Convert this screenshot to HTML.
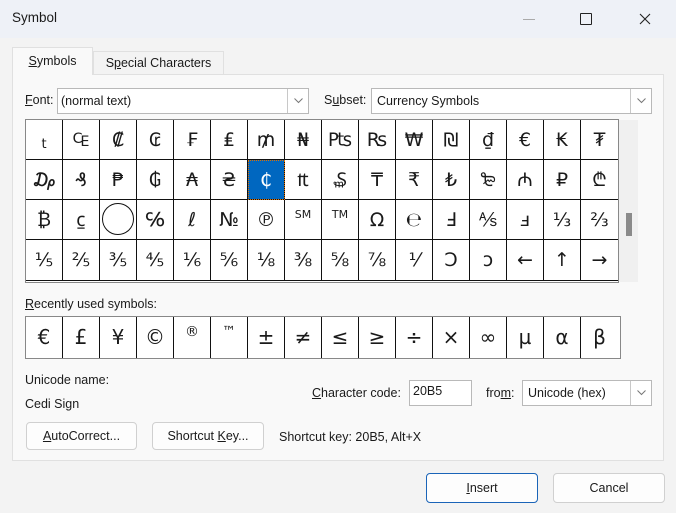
<!DOCTYPE html>
<html><head><meta charset="utf-8"><style>
*{box-sizing:border-box;margin:0;padding:0}
body{width:676px;height:513px;background:#f3f3f3;font-family:"Segoe UI","Liberation Sans","DejaVu Sans",sans-serif;font-size:12px;color:#1a1a1a;position:relative;overflow:hidden}
.a{position:absolute}
.title{left:0;top:0;width:676px;height:38px;background:#eef1f7}
.panel{left:12px;top:74px;width:652px;height:387px;background:#f9f9f9;border:1px solid #e0e0e0}
.tab{top:48px;height:27px;border:1px solid #e0e0e0;border-bottom:none;background:#f9f9f9;text-align:center;line-height:26px;font-size:12.5px}
.combo{background:#fff;border:1px solid #b9b9b9;height:26px;line-height:24px;padding-left:3px;font-size:12.5px}
.combo .dd{position:absolute;right:0;top:0;width:21px;height:24px;border-left:1px solid #c8c8c8}
.combo .dd svg{position:absolute;left:6px;top:9px}
.g{position:absolute;width:37px;height:40px;border-right:1px solid #111;border-bottom:1px solid #111;text-align:center;line-height:40px;font-family:"DejaVu Sans","Liberation Sans",sans-serif;font-size:19px;overflow:hidden;white-space:nowrap;background:#fff}
.r{position:absolute;width:37px;height:41px;border-right:1px solid #111;text-align:center;line-height:41px;font-family:"DejaVu Sans","Liberation Sans",sans-serif;font-size:20px;background:#fff}
u{text-decoration:underline}
</style></head><body>
<div class="a title"></div>
<div class="a" style="left:12px;top:10px;font-size:13.5px">Symbol</div>
<div class="a" style="left:523px;top:19px;width:12px;height:1px;background:#aaa"></div>
<div class="a" style="left:580px;top:13px;width:12px;height:12px;border:1px solid #222;border-radius:1px"></div>
<svg class="a" style="left:639px;top:13px" width="12" height="12"><path d="M1 1L11 11M11 1L1 11" stroke="#222" stroke-width="1.1"/></svg>
<div class="a panel"></div>
<div class="a tab" style="left:12px;width:81px;height:28px;top:47px"><u>S</u>ymbols</div>
<div class="a tab" style="left:93px;width:131px;top:51px;height:23px;line-height:22px;background:#f3f3f3">S<u>p</u>ecial Characters</div>
<div class="a" style="left:25px;top:93px;font-size:12.5px"><u>F</u>ont:</div>
<div class="a combo" style="left:57px;top:88px;width:252px">(normal text)<div class="dd"><svg width="9" height="6"><path d="M0.5 0.5L4.5 4.5L8.5 0.5" fill="none" stroke="#777"/></svg></div></div>
<div class="a" style="left:324px;top:93px;font-size:12.5px">S<u>u</u>bset:</div>
<div class="a combo" style="left:371px;top:88px;width:281px;padding-left:5px">Currency Symbols<div class="dd"><svg width="9" height="6"><path d="M0.5 0.5L4.5 4.5L8.5 0.5" fill="none" stroke="#777"/></svg></div></div>
<div class="a" style="left:25px;top:119px;width:594px;height:164px;border:1px solid #888;background:#fff"></div>
<div id="grid"></div>
<div class="a" style="left:619px;top:120px;width:19px;height:162px;background:#f0f0f0"></div>
<div class="a" style="left:626px;top:213px;width:6px;height:23px;background:#8a8a8a"></div>
<div class="a" style="left:25px;top:297px;font-size:12.5px"><u>R</u>ecently used symbols:</div>
<div class="a" style="left:25px;top:316px;width:596px;height:43px;border:1px solid #888;background:#fff"></div>
<div id="rec"></div>
<div class="a" style="left:25px;top:373px;font-size:12.5px">Unicode name:</div>
<div class="a" style="left:25px;top:397px;font-size:12.5px">Cedi Sign</div>
<div class="a" style="left:312px;top:386px;font-size:12.5px"><u>C</u>haracter code:</div>
<div class="a" style="left:409px;top:380px;width:63px;height:26px;background:#fff;border:1px solid #b9b9b9;padding:3px 0 0 3px;font-size:12.5px">20B5</div>
<div class="a" style="left:486px;top:386px;font-size:12.5px">fro<u>m</u>:</div>
<div class="a combo" style="left:522px;top:380px;width:130px;padding-left:5px">Unicode (hex)<div class="dd"><svg width="9" height="6"><path d="M0.5 0.5L4.5 4.5L8.5 0.5" fill="none" stroke="#777"/></svg></div></div>
<div class="a" style="left:26px;top:422px;width:111px;height:28px;line-height:26px;background:#fdfdfd;border:1px solid #d0d0d0;border-radius:4px;text-align:center;font-size:12.5px"><u>A</u>utoCorrect...</div>
<div class="a" style="left:152px;top:422px;width:112px;height:28px;line-height:26px;background:#fdfdfd;border:1px solid #d0d0d0;border-radius:4px;text-align:center;font-size:12.5px">Shortcut <u>K</u>ey...</div>
<div class="a" style="left:279px;top:430px;font-size:12.5px">Shortcut key: 20B5, Alt+X</div>
<div class="a" style="left:426px;top:473px;width:112px;height:30px;line-height:28px;background:#fdfdfd;border:1px solid #1a64b8;border-radius:4px;text-align:center;font-size:12.5px"><u>I</u>nsert</div>
<div class="a" style="left:553px;top:473px;width:112px;height:30px;line-height:28px;background:#fdfdfd;border:1px solid #d0d0d0;border-radius:4px;text-align:center;font-size:12.5px">Cancel</div>
<script>
var rows=[["t","₠","₡","₢","₣","₤","₥","₦","₧","₨","₩","₪","₫","€","₭","₮"],
["₯","₰","₱","₲","₳","₴","₵","₶","₷","₸","₹","₺","₻","₼","₽","₾"],
["₿","⃀","","℅","ℓ","№","℗","SM","TM","Ω","℮","Ⅎ","⅍","ⅎ","⅓","⅔"],
["⅕","⅖","⅗","⅘","⅙","⅚","⅛","⅜","⅝","⅞","⅟","Ↄ","ↄ","←","↑","→"]];
var h="";
for(var r=0;r<4;r++)for(var c=0;c<16;c++){
 var x=26+37*c,y=120+40*r,s=rows[r][c],st="left:"+x+"px;top:"+y+"px;";
 if(c==15)st+="border-right:none;";
 if(r==3)st+="height:41px;";
 if(r==2&&c==2)s='<span style="display:inline-block;width:32px;height:32px;border:1px solid #111;border-radius:50%;vertical-align:middle;margin-top:-3px"></span>';
 if(s=="t")st+="font-size:13px;line-height:50px;";
 if(s=="SM"||s=="TM")st+="font-size:11px;line-height:30px;";
 if(r==1&&c==6)st+="background:#0067c0;color:#fff;outline:1px dotted #e07000;outline-offset:-1px;";
 h+='<div class="g" style="'+st+'">'+s+'</div>';
}
document.getElementById("grid").innerHTML=h;
var rec=["€","£","¥","©","®","™","±","≠","≤","≥","÷","×","∞","µ","α","β"];h="";
for(var c=0;c<16;c++){var st="left:"+(26+37*c)+"px;top:317px;";if(c==15)st+="border-right:none;";
 if(c==4||c==5)st+="font-size:14px;line-height:30px;";
 h+='<div class="r" style="'+st+'">'+rec[c]+'</div>';}
document.getElementById("rec").innerHTML=h;
</script>
</body></html>
